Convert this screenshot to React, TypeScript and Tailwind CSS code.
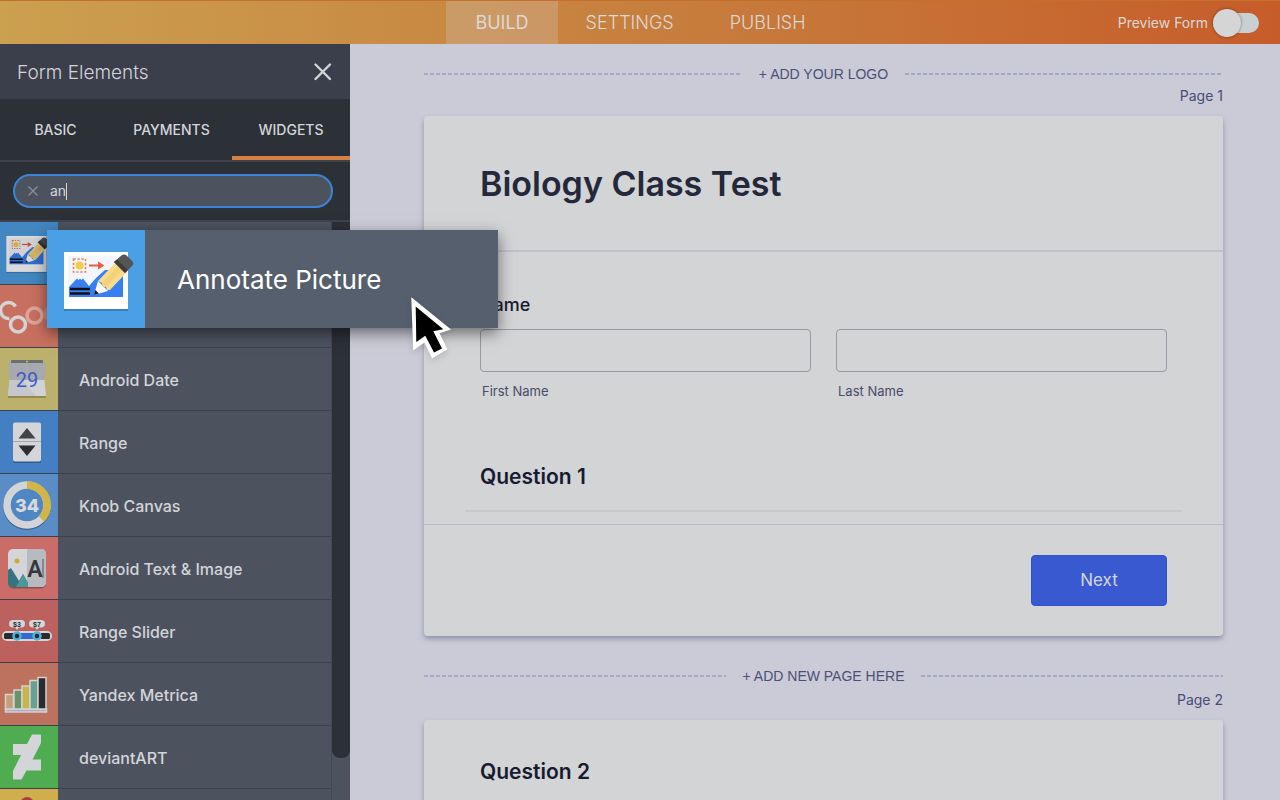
import { useState, type ReactNode } from "react";

function AnnotateIcon({ className, viewBox }: { className: string; viewBox: string }) {
  return (
    <svg viewBox={viewBox} className={className} aria-hidden="true">
      <rect x="17" y="24" width="64" height="57" fill="#2e6fa5" opacity=".6" />
      <rect x="17" y="22" width="64" height="57" fill="#fff" />
      <rect x="21" y="26" width="55" height="41" fill="#f3f6fd" />
      <path d="M22 67V57L30 48.500 33 46 36 48.500 42 56 49 48 58 40H76V67Z" fill="#3680f4" />
      <path d="M30 48.500 33 45.500 36 48.500 34.500 50 33 48.500 31.500 50Z" fill="#fff" />
      <circle cx="32.500" cy="35.500" r="4" fill="#f6cb45" />
      <rect x="26.500" y="29" width="12" height="13" fill="none" stroke="#ea8050" strokeWidth="1.600" strokeDasharray="2.200 1.800" />
      <path d="M42 35.500H53" stroke="#e85c41" strokeWidth="2" />
      <path d="M51 31.500 57.500 35.500 51 39.500Z" fill="#e85c41" />
      <path d="M23 59H43M23 63.500H43" stroke="#111" strokeWidth="2.400" />
      <path d="M47 65 51 51 61 61Z" fill="#fff" />
      <path d="M47 65 48.300 60 51.800 63.500Z" fill="#181818" />
      <path d="M51 51 69 32 80 42 63 60 60 60 59 57 56 57 55 53Z" fill="#f9dc8a" />
      <path d="M55 53 72 35 76 39 59 57 56 57Z" fill="#f5d07a" />
      <path d="M67 32 75 25Q77 24 79 25L86 32Q87 34 85 36L78 43Z" fill="#555" />
      <path d="M67 32 70 29.500 81 40 78 43Z" fill="#3c3c3c" />
    </svg>
  );
}

function ChainIcon() {
  return (
    <svg viewBox="0 0 58 62" className="h-full w-full" fill="none" strokeWidth="3.500" aria-hidden="true">
      <path d="M15.500 21.500A8 8 0 1 0 9.500 33.500" stroke="#d5d3d3" />
      <circle cx="18" cy="39.500" r="7.500" stroke="#d5d3d3" />
      <circle cx="34.500" cy="30.500" r="7.500" stroke="#dda69b" />
      <circle cx="53" cy="29" r="7.500" stroke="#d08d80" />
    </svg>
  );
}

function CalendarIcon() {
  return (
    <svg viewBox="0 0 58 62" className="h-full w-full" aria-hidden="true">
      <path d="M8 48H46V50H8Z" fill="#94894f" />
      <rect x="11" y="12" width="32" height="6" rx="1" fill="#6b6d70" />
      <circle cx="27" cy="13.500" r="1" fill="#d8bd51" />
      <path d="M8 15H46L44.500 32H9.500Z" fill="#a6a9ae" />
      <path d="M9.500 32H44.500L46 48H8Z" fill="#d0d2d5" />
      <path d="M9.500 32H22L36 48H8Z" fill="#c4c7cb" />
      <text x="27" y="39" textAnchor="middle" fontSize="20" fill="#3f5cc4" className="font-['Roboto',sans-serif]">29</text>
    </svg>
  );
}

function RangeIcon() {
  return (
    <svg viewBox="0 0 58 62" className="h-full w-full" aria-hidden="true">
      <rect x="13" y="13" width="28" height="39" rx="2" fill="#2f5d92" />
      <rect x="13" y="11.500" width="28" height="39" rx="2" fill="#d3d5d8" />
      <path d="M13 30.500H41" stroke="#a4a7ab" strokeWidth="1" />
      <path d="M27 17 35.500 27.500H18.500Z" fill="#414347" />
      <path d="M27 45 35.500 34.500H18.500Z" fill="#2c2d30" />
    </svg>
  );
}

function KnobIcon() {
  return (
    <svg viewBox="0 0 58 62" className="h-full w-full" aria-hidden="true">
      <circle cx="27" cy="32" r="20.500" fill="none" stroke="#3e6391" strokeWidth="7" />
      <circle cx="27" cy="31" r="20" fill="#4f86c4" stroke="#d2d4d7" strokeWidth="7.500" />
      <path d="M27 11A20 20 0 0 1 41.500 45" fill="none" stroke="#d3b446" strokeWidth="7.500" />
      <text x="27" y="37.500" textAnchor="middle" fontSize="18" fontWeight="800" fill="#d8dade" className="font-['Inter',sans-serif]">34</text>
    </svg>
  );
}

function TextImageIcon() {
  return (
    <svg viewBox="0 0 58 62" className="h-full w-full" aria-hidden="true">
      <rect x="8" y="13.500" width="38" height="38" rx="5" fill="#8f4c4c" />
      <rect x="8" y="12" width="38" height="38" rx="5" fill="#d3d5d8" />
      <path d="M27 12H41Q46 12 46 17V45Q46 50 41 50H27Z" fill="#b7babe" />
      <circle cx="17" cy="24" r="2.500" fill="#d2a83a" />
      <path d="M8 33 11 31 19 44 23 37 28 46V50H12Q8 49 8 46Z" fill="#33757f" />
      <path d="M16 50 23 37 28 46V50Z" fill="#4c979c" />
      <text x="35" y="40" textAnchor="middle" fontSize="23" fontWeight="600" fill="#34373c" className="font-['Roboto',sans-serif]">A</text>
      <path d="M43 22V41" stroke="#55585d" strokeWidth="1" />
    </svg>
  );
}

function SliderIcon() {
  return (
    <svg viewBox="0 0 58 62" className="h-full w-full" aria-hidden="true">
      <rect x="2" y="31" width="50" height="10" rx="5" fill="#d3d5d8" />
      <rect x="4" y="33" width="46" height="6" rx="1.500" fill="#292b2f" />
      <rect x="13" y="33" width="28" height="6" fill="#d3d5d8" />
      <rect x="17" y="33" width="20" height="6" fill="#336bd0" />
      <circle cx="17" cy="36" r="3.500" fill="#262b33" stroke="#4eb2d9" strokeWidth="2.500" />
      <circle cx="37" cy="36" r="3.500" fill="#262b33" stroke="#4eb2d9" strokeWidth="2.500" />
      <path d="M14 26H20L17 30ZM34 26H40L37 30Z" fill="#d3d5d8" />
      <rect x="9" y="20" width="16" height="7.500" rx="3.750" fill="#d3d5d8" />
      <rect x="29" y="20" width="16" height="7.500" rx="3.750" fill="#d3d5d8" />
      <g fontSize="7" fontWeight="700" fill="#333" textAnchor="middle" className="font-['Liberation_Sans',sans-serif]">
        <text x="17" y="26.500">$3</text>
        <text x="37" y="26.500">$7</text>
      </g>
    </svg>
  );
}

function MetricaIcon() {
  return (
    <svg viewBox="0 0 58 62" className="h-full w-full" stroke="#d3d2cf" strokeWidth="1.500" aria-hidden="true">
      <rect x="5.500" y="46" width="41" height="3" fill="#b5a9cc" />
      <rect x="5.500" y="31.500" width="8" height="14.500" fill="#c69e78" />
      <rect x="14" y="27" width="8" height="19" fill="#67946a" />
      <rect x="22" y="23" width="8" height="23" fill="#c7b44c" />
      <rect x="30" y="17.500" width="8" height="28.500" fill="#68a08f" />
      <rect x="38" y="14.500" width="8" height="31.500" fill="#292c30" />
    </svg>
  );
}

function DeviantIcon() {
  return (
    <svg viewBox="0 0 58 62" className="h-full w-full" aria-hidden="true">
      <path d="M32 8.500H41V17L32.500 33.500H41V44.500H26.500L21.500 53.500H13V45L21 29H13V18H27Z" fill="#d3d5d8" />
    </svg>
  );
}

function PinIcon() {
  return (
    <svg viewBox="0 0 58 62" className="h-full w-full" aria-hidden="true">
      <circle cx="27" cy="15" r="7" fill="#ad3b42" />
    </svg>
  );
}

type Widget = { label: string; tile: string; icon: ReactNode };

const widgets: Widget[] = [
  { label: "Annotate Picture", tile: "bg-[#4287c2]", icon: <AnnotateIcon className="h-full w-full brightness-85" viewBox="7 0 92 98" /> },
  { label: "", tile: "bg-[#c87060]", icon: <ChainIcon /> },
  { label: "Android Date", tile: "bg-[#bcb06d]", icon: <CalendarIcon /> },
  { label: "Range", tile: "bg-[#437fc2]", icon: <RangeIcon /> },
  { label: "Knob Canvas", tile: "bg-[#5a8dc5]", icon: <KnobIcon /> },
  { label: "Android Text & Image", tile: "bg-[#ca6d69]", icon: <TextImageIcon /> },
  { label: "Range Slider", tile: "bg-[#bd615f]", icon: <SliderIcon /> },
  { label: "Yandex Metrica", tile: "bg-[#bd725e]", icon: <MetricaIcon /> },
  { label: "deviantART", tile: "bg-[#4fac50]", icon: <DeviantIcon /> },
  { label: "", tile: "bg-[#d0ae4b]", icon: <PinIcon /> },
];

function TopBar() {
  return (
    <header className="grid h-11 shrink-0 grid-cols-[1fr_auto_1fr] border-t border-[#c5702a] bg-linear-to-r from-[#cba04f] via-[#c77f3e] to-[#c65c2a] text-[#dcd8d4]">
      <nav className="col-start-2 flex text-lg">
        <a href="#build" className="flex items-center bg-[#d3d4d5]/25 px-[29px]">BUILD</a>
        <a href="#settings" className="flex items-center px-7 font-light">SETTINGS</a>
        <a href="#publish" className="flex items-center px-7 font-light">PUBLISH</a>
      </nav>
      <label className="flex items-center gap-[5px] justify-self-end pr-[21px] text-sm">
        Preview Form
        <input
          type="checkbox"
          role="switch"
          className="flex h-5 w-[46px] appearance-none items-center rounded-full bg-[#c9d0d2] before:size-7 before:rounded-full before:bg-[#d5d5d5] before:shadow-[0_0_3px_rgba(0,0,0,0.45)] checked:justify-end"
        />
      </label>
    </header>
  );
}

function Sidebar() {
  const [query, setQuery] = useState("an");
  return (
    <aside className="flex w-[350px] shrink-0 flex-col bg-[#2c3037] text-[#d3d5d8]">
      <div className="flex h-[55px] shrink-0 items-center justify-between bg-[#3b3f4b] px-[17px]">
        <h2 className="pt-1 text-[19px] font-light">Form Elements</h2>
        <button type="button" aria-label="Close" className="flex size-5 items-center justify-center">
          <svg viewBox="0 0 20 20" className="size-5" stroke="currentColor" strokeWidth="2.400" strokeLinecap="round" aria-hidden="true">
            <path d="M2.500 2.500 17 17M17 2.500 2.500 17" />
          </svg>
        </button>
      </div>
      <div role="tablist" className="flex h-[63px] shrink-0 border-b-2 border-[#3e424b] text-sm font-medium">
        <button type="button" role="tab" className="w-[111px]">BASIC</button>
        <button type="button" role="tab" className="flex-1">PAYMENTS</button>
        <button type="button" role="tab" aria-selected="true" className="w-[118px] border-b-4 border-[#d58143] pt-1">WIDGETS</button>
      </div>
      <div className="shrink-0 border-b-2 border-[#3e434d] py-3 pr-[17px] pl-[13px]">
        <div className="flex h-[34px] items-center rounded-full border-2 border-[#3a85d6] bg-[#4c535f] px-3">
          <button type="button" aria-label="Clear search" className="mr-[11px] flex size-3 items-center justify-center text-[#8d929b]">
            <svg viewBox="0 0 12 12" className="size-3" stroke="currentColor" strokeWidth="1.200" aria-hidden="true">
              <path d="M1.500 1.500 10.500 10.500M10.500 1.500 1.500 10.500" />
            </svg>
          </button>
          <input
            aria-label="Search widgets"
            value={query}
            onChange={(e) => setQuery(e.target.value)}
            className="field-sizing-content bg-transparent text-sm outline-none"
          />
          <span className="h-[17px] w-px bg-[#d3d5d8]" />
        </div>
      </div>
      <div className="flex min-h-0 flex-1 bg-[#4c535f]">
        <ul className="flex-1 overflow-hidden border-r border-[#434954]">
          {widgets.map((w, i) => (
            <li key={i} className="flex h-[63px] items-center border-b border-[#3b424d]">
              <div className={`h-full w-[58px] shrink-0 ${w.tile}`}>{w.icon}</div>
              <span className="pt-px pl-[21px] text-base font-medium">{w.label}</span>
            </li>
          ))}
        </ul>
        <div className="w-[18px]">
          <div className="h-[536px] rounded-b-lg bg-[#2c3037]" />
        </div>
      </div>
    </aside>
  );
}

function AddDivider({ children }: { children: ReactNode }) {
  return (
    <div className="flex h-5 items-center gap-[17px] font-['Liberation_Sans',sans-serif] text-sm text-[#4b5079]">
      <span className="h-0.5 flex-1 bg-[repeating-linear-gradient(to_right,#a5a7c9_0px,#a5a7c9_4px,transparent_4px,transparent_6px)]" />
      <button type="button">{children}</button>
      <span className="h-0.5 flex-1 bg-[repeating-linear-gradient(to_right,#a5a7c9_0px,#a5a7c9_4px,transparent_4px,transparent_6px)]" />
    </div>
  );
}

function NameField({ id, label }: { id: string; label: string }) {
  return (
    <div className="flex flex-1 flex-col gap-[9px]">
      <input id={id} className="h-[43px] w-full rounded-[4px] border border-[#9799a5] bg-transparent px-3 outline-none" />
      <label htmlFor={id} className="pl-0.5 text-[13px] leading-5 text-[#484c68]">{label}</label>
    </div>
  );
}

function Canvas() {
  return (
    <main className="min-w-0 flex-1 overflow-hidden bg-[#cacbd6] pt-5 pr-[57px] pl-[74px] text-[#171b30]">
      <AddDivider>+ ADD YOUR LOGO</AddDivider>
      <p className="pt-0.5 pb-2.5 text-right text-sm text-[#474d76]">Page 1</p>
      <section className="rounded-[4px] bg-[#d3d4d5] shadow-[0_3px_5px_rgba(90,92,130,0.5)]">
        <div className="flex h-[136px] items-center border-b-2 border-[#bfc0ca] px-14">
          <h1 className="text-[34px] font-semibold text-[#23283a]">Biology Class Test</h1>
        </div>
        <div className="px-14 pt-[41px]">
          <h2 className="text-lg leading-6 font-medium">Name</h2>
          <div className="mt-3 flex gap-[25px]">
            <NameField id="first-name" label="First Name" />
            <NameField id="last-name" label="Last Name" />
          </div>
          <h2 className="mt-[62px] text-[21px] leading-7 font-semibold">Question 1</h2>
        </div>
        <div className="mx-[41px] mt-[19px] border-t-2 border-[#c8c9cc]" />
        <div className="mt-3 flex justify-end border-t border-[#b9bac8] px-14 py-[30px]">
          <button type="button" className="h-[51px] w-[136px] rounded-[4px] border border-[#3052cf] bg-[#3959d0] text-[17px] text-[#d3d5dc]">Next</button>
        </div>
      </section>
      <div className="mt-[30px]">
        <AddDivider>+ ADD NEW PAGE HERE</AddDivider>
      </div>
      <p className="pt-1 pb-2.5 text-right text-sm text-[#474d76]">Page 2</p>
      <section className="rounded-t-[4px] bg-[#d3d4d5] px-14 pt-[38px] pb-14 shadow-[0_3px_5px_rgba(90,92,130,0.5)]">
        <h2 className="text-[21px] leading-7 font-semibold">Question 2</h2>
      </section>
    </main>
  );
}

function DraggedWidget() {
  return (
    <div className="absolute top-[230px] left-[47px] flex h-[98px] w-[451px] items-center bg-[#565f6d] text-white shadow-[0_5px_14px_rgba(0,0,0,0.5)]">
      <div className="h-full w-[98px] bg-[#4a9fe5]">
        <AnnotateIcon className="size-full" viewBox="0 0 98 98" />
      </div>
      <span className="pl-8 text-[26px]">Annotate Picture</span>
      <svg viewBox="0 0 42 64" className="absolute top-[66px] left-[363px] h-16 w-[42px] drop-shadow-md" aria-hidden="true">
        <path d="M1.300 1.300 41 33.500 29.500 37.200 37.500 53.200 22 62.500 14.500 46.500 3.200 54.500Z" fill="#fff" />
        <path d="M5.700 10.500 33.300 33.200 23.300 35.200 32 52.500 24 56.500 15.300 39.800 6.300 46Z" fill="#000" />
      </svg>
    </div>
  );
}

export default function App() {
  return (
    <div className="relative flex h-screen flex-col overflow-hidden font-['Inter',sans-serif]">
      <TopBar />
      <div className="flex min-h-0 flex-1">
        <Sidebar />
        <Canvas />
      </div>
      <DraggedWidget />
    </div>
  );
}
